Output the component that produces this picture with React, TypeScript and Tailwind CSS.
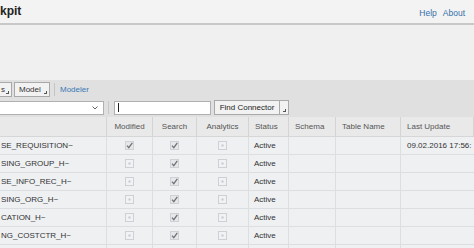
import React from "react";

const COLS = "grid-cols-[107px_46px_44px_52px_40px_47px_65px_73px]";

const ROWS = [
	{ name: "SE_REQUISITION~", modified: true, update: "09.02.2016 17:56:" },
	{ name: "SING_GROUP_H~", modified: false, update: "" },
	{ name: "SE_INFO_REC_H~", modified: false, update: "" },
	{ name: "SING_ORG_H~", modified: false, update: "" },
	{ name: "CATION_H~", modified: false, update: "" },
	{ name: "NG_COSTCTR_H~", modified: false, update: "" },
	{ name: "", modified: false, update: "" },
];

function Check({ on }: { on: boolean }) {
	if (on) {
		return (
			<svg width="9" height="9" viewBox="0 0 9 9">
				<rect x="0.5" y="0.5" width="8" height="8" fill="#e6e7e9" stroke="#cfd1d4" />
				<path d="M2 4.6 L3.8 6.6 L7.3 1.8" fill="none" stroke="#6f7378" strokeWidth="1.3" />
			</svg>
		);
	}
	return (
		<svg width="9" height="9" viewBox="0 0 9 9">
			<rect x="0.5" y="0.5" width="8" height="8" fill="#f1f2f4" stroke="#cdd0d4" />
			<rect x="3.5" y="3.5" width="2" height="2" fill="#c4c7cb" />
		</svg>
	);
}

function Corner() {
	return <span className="absolute right-[2px] bottom-[2px] h-[3px] w-[3px] border-r border-b border-[#555]" />;
}

export default function App() {
	return (
		<div className="h-[248px] w-[474px] overflow-hidden bg-[#f0f0f0] text-[8px] text-[#333] [font-family:'Liberation_Sans',Arial,sans-serif]">
			<div className="flex h-[25px] items-center justify-between border-b-2 border-[#c8c8c8] bg-[#f3f3f3] pr-[9px]">
				<span className="-mt-[2px] text-[12px] font-bold text-[#222]">kpit</span>
				<div className="mt-[4px] flex gap-[6px] text-[8.5px] text-[#3470a8]">
					<span>Help</span>
					<span>About</span>
				</div>
			</div>

			<div className="h-[55px] bg-[#f0f0f0]" />

			<div className="flex h-[37px] flex-col gap-[3px] bg-[#e0e0e0] pt-[2px]">
				<div className="flex h-[15px] items-center">
					<div className="relative flex h-[15px] w-[12px] items-center border border-l-0 border-[#a9a9a9] bg-[#f2f2f2] pl-[1px] text-[#333]">
						<span>s</span>
						<Corner />
					</div>
					<div className="relative ml-[2px] flex h-[15px] w-[36px] items-center border border-[#a9a9a9] bg-[#f2f2f2] pl-[4px]">
						Model
						<Corner />
					</div>
					<div className="ml-[4px] h-[13px] w-px bg-[#c4c4c4]" />
					<span className="ml-[5px] text-[#3a78b5]">Modeler</span>
				</div>
				<div className="flex h-[15px] items-center">
					<div className="relative flex h-[14px] w-[104px] items-center border border-l-0 border-[#b0b0b0] bg-white">
						<svg className="absolute right-[5px] top-[4px]" width="6" height="4" viewBox="0 0 6 4">
							<path d="M0.5 0.5 L3 3 L5.5 0.5" fill="none" stroke="#666" strokeWidth="1" />
						</svg>
					</div>
					<div className="ml-[4px] h-[13px] w-px bg-[#c8c8c8]" />
					<div className="ml-[5px] flex h-[14px] w-[97px] items-center border border-[#b0b0b0] bg-white pl-[3px]">
						<span className="h-[9px] w-px bg-[#222]" />
					</div>
					<div className="ml-[3px] flex h-[15px] border border-[#a9a9a9] bg-[#f2f2f2]">
						<span className="flex w-[65px] items-center justify-center border-r border-[#a9a9a9] text-[#222]">
							Find Connector
						</span>
						<span className="relative w-[8px]">
							<Corner />
						</span>
					</div>
				</div>
			</div>

			<div className={`grid h-[20px] ${COLS} border-b border-[#d6d6d6] bg-[#e9e9e9] text-[#555]`}>
				{["", "Modified", "Search", "Analytics", "Status", "Schema", "Table Name", "Last Update"].map((h, i) => (
					<div
						key={i}
						className={`flex items-center border-r border-[#d4d4d4] ${i < 4 ? "justify-center" : "pl-[6px]"}`}
					>
						{h}
					</div>
				))}
			</div>

			{ROWS.map((r, i) => (
				<div key={i} className={`grid h-[18px] ${COLS} border-b border-[#dcdfe2] bg-[#eef0f2] text-[#333]`}>
					<div className="flex items-center border-r border-[#dcdfe2] pl-[1px]">{r.name}</div>
					{r.name ? (
						<>
							<div className="flex items-center justify-center border-r border-[#dcdfe2]">
								<Check on={r.modified} />
							</div>
							<div className="flex items-center justify-center border-r border-[#dcdfe2]">
								<Check on />
							</div>
							<div className="flex items-center justify-center border-r border-[#dcdfe2]">
								<Check on={false} />
							</div>
							<div className="flex items-center border-r border-[#dcdfe2] pl-[5px]">Active</div>
						</>
					) : (
						<>
							<div className="border-r border-[#dcdfe2]" />
							<div className="border-r border-[#dcdfe2]" />
							<div className="border-r border-[#dcdfe2]" />
							<div className="border-r border-[#dcdfe2]" />
						</>
					)}
					<div className="border-r border-[#dcdfe2]" />
					<div className="border-r border-[#dcdfe2]" />
					<div className="flex items-center whitespace-nowrap pl-[6px]">{r.update}</div>
				</div>
			))}
		</div>
	);
}
